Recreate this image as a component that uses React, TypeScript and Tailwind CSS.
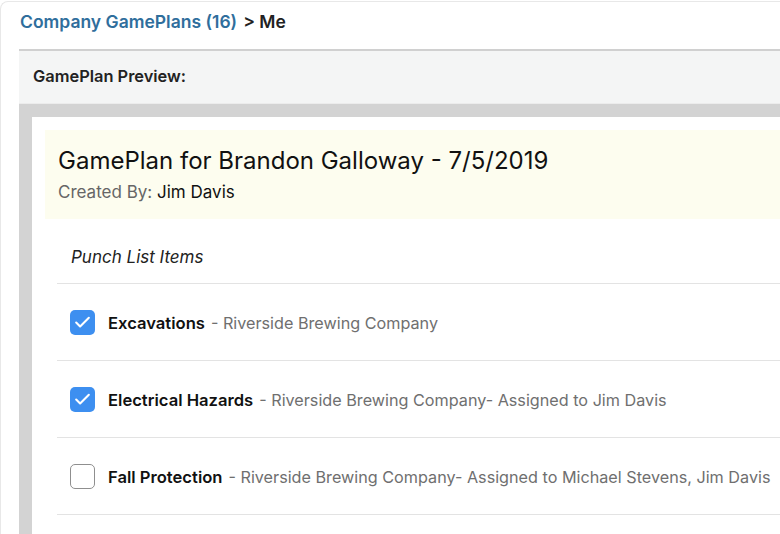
import { Check } from "lucide-react";

type Item = {
  title: string;
  detail: string;
  done: boolean;
};

const items: Item[] = [
  { title: "Excavations", detail: "Riverside Brewing Company", done: true },
  {
    title: "Electrical Hazards",
    detail: "Riverside Brewing Company- Assigned to Jim Davis",
    done: true,
  },
  {
    title: "Fall Protection",
    detail: "Riverside Brewing Company- Assigned to Michael Stevens, Jim Davis",
    done: false,
  },
];

const CheckBox = ({ checked }: { checked: boolean }) =>
  checked ? (
    <span className="flex items-center justify-center w-[25px] h-[25px] rounded-[5px] bg-[#3d8ff0] shrink-0">
      <Check className="w-[19px] h-[19px] text-white" strokeWidth={2.6} />
    </span>
  ) : (
    <span className="w-[25px] h-[25px] rounded-[5px] border border-[#8f8f8f] bg-white shrink-0" />
  );

export default function App() {
  return (
    <div className="w-[780px] h-[534px] overflow-hidden bg-white font-['Inter',sans-serif]">
      <div className="h-full mt-px border-l border-t border-[#e8e8e8] rounded-tl-lg pl-[18px]">
        {/* - Breadcrumb - */}
        <div className="h-[47px] flex items-center pl-px pb-[6px] text-[17.5px] font-semibold">
          <span className="text-[#2f6e9c]">Company GamePlans (16)</span>
          <span className="text-[#222] ml-[6px]">&gt; Me</span>
        </div>

        {/* - Preview - */}
        <div className="border-t-2 border-[#d0d0d0]">
          <div className="h-[53px] flex items-center px-[14px] pb-[2px] bg-[#f4f5f5] border-b border-[#ececec] text-[16.4px] font-semibold text-[#222]">
            GamePlan Preview:
          </div>

          <div className="bg-[#d3d3d3] pt-[13px] pl-[13px]">
            <div className="bg-white pt-[13px] pl-[13px] h-[430px]">
              <div className="bg-[#fdfdef] h-[89px] px-[13px] pt-[16px]">
                <h1 className="text-[24px] leading-[30px] text-[#111] whitespace-nowrap">
                  GamePlan for Brandon Galloway - 7/5/2019
                </h1>
                <p className="text-[17px] leading-[22px] mt-[5px] text-[#111]">
                  <span className="text-[#666]">Created By:</span> Jim Davis
                </p>
              </div>

              <div className="pl-[12px]">
                <div className="h-[65px] flex items-center pl-[14px] pt-[14px] italic text-[17px] text-[#222] border-b border-[#e3e3e3]">
                  Punch List Items
                </div>
                {items.map((item) => (
                  <div
                    key={item.title}
                    className="h-[77px] flex items-center gap-[13px] pl-[13px] border-b border-[#e3e3e3] whitespace-nowrap"
                  >
                    <CheckBox checked={item.done} />
                    <span className="text-[16.6px] font-semibold text-[#111] pt-[2px]">
                      {item.title}
                      <span className="font-normal text-[#6f6f6f] ml-[6px] text-[16.2px]">
                        - {item.detail}
                      </span>
                    </span>
                  </div>
                ))}
              </div>
            </div>
          </div>
        </div>
      </div>
    </div>
  );
}
